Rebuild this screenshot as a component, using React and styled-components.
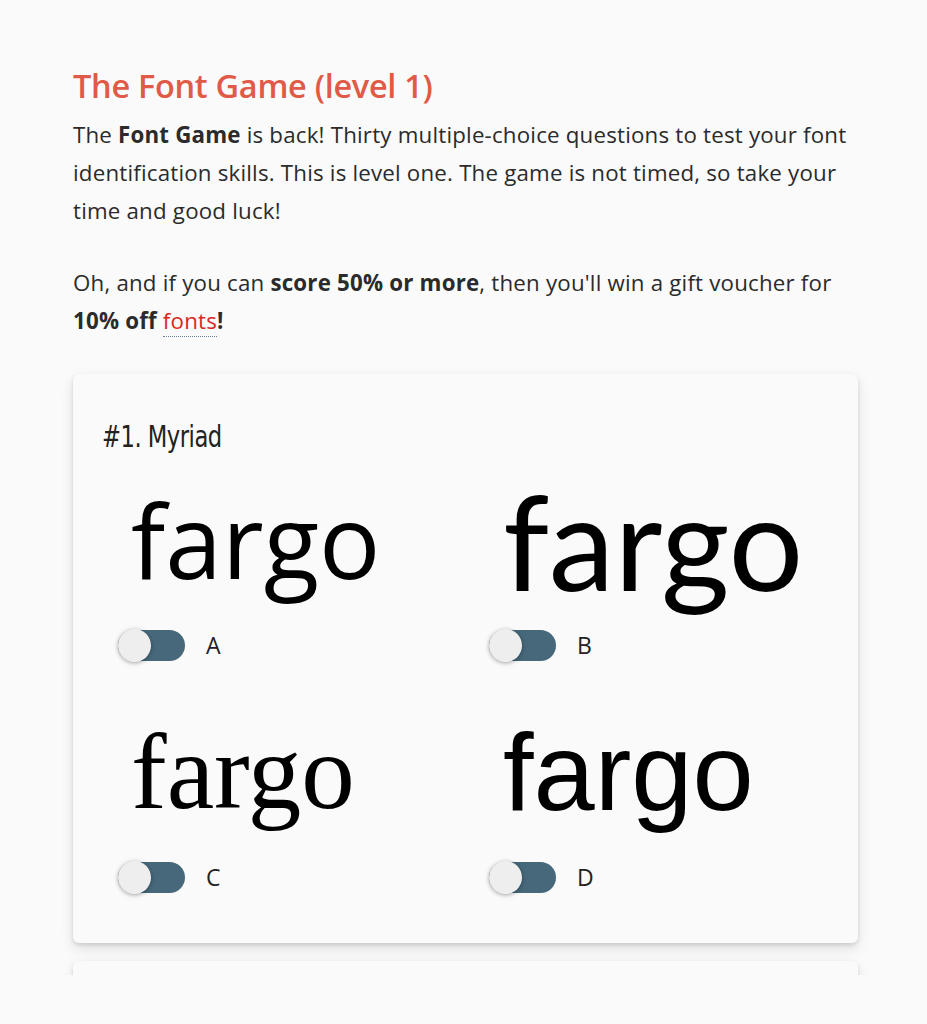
import React from "react";
import styled, { createGlobalStyle } from "styled-components";

const GlobalStyle = createGlobalStyle`
  html, body {
    margin: 0;
    padding: 0;
    background: #fafafa;
  }
  body {
    font-family: "Open Sans", Lato, sans-serif;
    color: #2b2b2b;
  }
`;

const Page = styled.div`
  height: 975px;
  overflow: hidden;
  padding: 62px 69px 0 73px;
  box-sizing: border-box;
`;

const Title = styled.h1`
  margin: 0 0 6px;
  font-family: "Open Sans", sans-serif;
  font-size: 32.5px;
  font-weight: 600;
  letter-spacing: -0.3px;
  color: #e05a47;
  line-height: 48px;
`;

const Para = styled.p`
  margin: 0 0 34px;
  font-size: 22.3px;
  letter-spacing: 0.2px;
  line-height: 38px;
  color: #2b2b2b;
  b {
    font-weight: 700;
  }
`;

const FontLink = styled.a`
  color: #d9281e;
  text-decoration: none;
  border-bottom: 1px dotted #6b7a99;
`;

const Card = styled.section`
  margin-top: ${(p) => p.$gap || 0}px;
  background: #fafafa;
  border-radius: 6px;
  box-shadow: 0 2px 4px rgba(0, 0, 0, 0.12), 0 6px 14px rgba(0, 0, 0, 0.1);
  padding: 47px 29px 50px;
  min-height: ${(p) => p.$min || 0}px;
`;

const Question = styled.h2`
  margin: 0 0 13px;
  font-family: "DejaVu Sans Condensed", "Open Sans", sans-serif;
  font-weight: 400;
  font-size: 30px;
  line-height: 31px;
  letter-spacing: -0.6px;
  color: #222;
  transform: scaleX(0.84);
  transform-origin: left center;
`;

const Options = styled.div`
  display: grid;
  grid-template-columns: 371px 1fr;
  row-gap: 36px;
`;

const Option = styled.label`
  display: flex;
  flex-direction: column;
  align-items: flex-start;
  padding-left: 16px;
`;

const Sample = styled.div`
  font-family: ${(p) => p.$family};
  font-size: ${(p) => p.$size}px;
  font-weight: ${(p) => p.$weight || 400};
  line-height: 150px;
  height: 150px;
  color: #000;
  padding-left: ${(p) => p.$indent || 0}px;
`;

const Choice = styled.div`
  display: flex;
  align-items: center;
  gap: 21px;
  margin-top: 14px;
`;

const Track = styled.span`
  position: relative;
  display: inline-block;
  width: 67px;
  height: 31px;
  border-radius: 16px;
  background: #46687a;
`;

const Knob = styled.span`
  position: absolute;
  left: 0;
  top: -1px;
  width: 33px;
  height: 33px;
  border-radius: 50%;
  background: #eeeeee;
  box-shadow: 0 1px 4px rgba(0, 0, 0, 0.35);
`;

const Letter = styled.span`
  font-family: "Open Sans", sans-serif;
  font-size: 23px;
  color: #222;
`;

const options = [
  { key: "A", family: '"Open Sans", sans-serif', size: 102, indent: 13 },
  { key: "B", family: "Lato, sans-serif", size: 132, indent: 14 },
  { key: "C", family: '"Liberation Serif", serif', size: 107, indent: 13 },
  { key: "D", family: '"Liberation Sans", Arial, sans-serif', size: 110, indent: 14 },
];

export default function App() {
  return (
    <>
      <GlobalStyle />
      <Page>
        <Title>The Font Game (level 1)</Title>
        <Para>
          The <b>Font Game</b> is back! Thirty multiple-choice questions to test
          your font identification skills. This is level one. The game is not
          timed, so take your time and good luck!
        </Para>
        <Para>
          Oh, and if you can <b>score 50% or more</b>, then you'll win a gift
          voucher for <b>10% off</b> <FontLink href="#">fonts</FontLink>
          <b>!</b>
        </Para>
        <Card>
          <Question>#1. Myriad</Question>
          <Options>
            {options.map((o) => (
              <Option key={o.key}>
                <Sample $family={o.family} $size={o.size} $indent={o.indent}>
                  fargo
                </Sample>
                <Choice>
                  <Track>
                    <Knob />
                  </Track>
                  <Letter>{o.key}</Letter>
                </Choice>
              </Option>
            ))}
          </Options>
        </Card>
        <Card $gap={18} $min={200} />
      </Page>
    </>
  );
}
